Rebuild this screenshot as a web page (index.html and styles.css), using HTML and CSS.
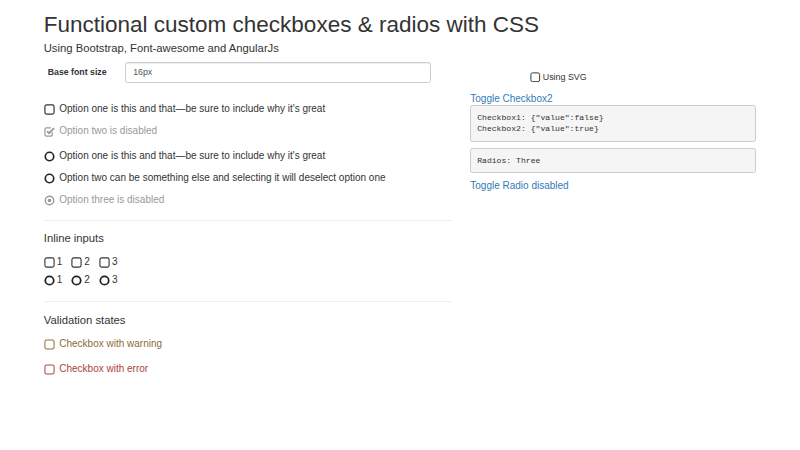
FILE: index.html
```html
<!DOCTYPE html>
<html>
<head>
<meta charset="utf-8">
<link rel="stylesheet" href="styles.css">
</head>
<body>
<div class="container">
  <h1 class="title">Functional custom checkboxes &amp; radios with CSS</h1>
  <p class="subtitle">Using Bootstrap, Font-awesome and AngularJs</p>
  <div class="row">
    <div class="col-left">
      <div class="form-group">
        <label class="form-label">Base font size</label>
        <div class="input">16px</div>
      </div>

      <div class="group first">
        <div class="opt">
          <svg class="ico" viewBox="0 0 12 12"><rect x="1" y="1" width="10" height="10" rx="2" fill="none" stroke="#333" stroke-width="1.3"/></svg>
          <span>Option one is this and that—be sure to include why it's great</span>
        </div>
        <div class="opt disabled">
          <svg class="ico" viewBox="0 0 12 12"><path d="M9 6.8V9.5a1.5 1.5 0 0 1-1.5 1.5h-5A1.5 1.5 0 0 1 1 9.5v-6A1.5 1.5 0 0 1 2.5 2H7.5" fill="none" stroke="#999" stroke-width="1.3"/><path d="M3.3 5.6l2.2 2.2 5.5-5.5" fill="none" stroke="#999" stroke-width="2"/></svg>
          <span>Option two is disabled</span>
        </div>
      </div>

      <div class="group">
        <div class="opt">
          <svg class="ico" viewBox="0 0 12 12"><circle cx="6" cy="6" r="4.6" fill="none" stroke="#222" stroke-width="1.8"/></svg>
          <span>Option one is this and that—be sure to include why it's great</span>
        </div>
        <div class="opt">
          <svg class="ico" viewBox="0 0 12 12"><circle cx="6" cy="6" r="4.6" fill="none" stroke="#222" stroke-width="1.8"/></svg>
          <span>Option two can be something else and selecting it will deselect option one</span>
        </div>
        <div class="opt disabled">
          <svg class="ico" viewBox="0 0 12 12"><circle cx="6" cy="6" r="4.6" fill="none" stroke="#999" stroke-width="1.5"/><circle cx="6" cy="6" r="2" fill="#999"/></svg>
          <span>Option three is disabled</span>
        </div>
      </div>

      <hr class="sep first-sep">
      <h4 class="section">Inline inputs</h4>
      <div class="inline-row cb">
        <span class="inl"><svg class="ico-s" viewBox="0 0 12 12"><rect x="1" y="1" width="10" height="10" rx="2" fill="none" stroke="#333" stroke-width="1.2"/></svg>1</span>
        <span class="inl"><svg class="ico-s" viewBox="0 0 12 12"><rect x="1" y="1" width="10" height="10" rx="2" fill="none" stroke="#333" stroke-width="1.2"/></svg>2</span>
        <span class="inl"><svg class="ico-s" viewBox="0 0 12 12"><rect x="1" y="1" width="10" height="10" rx="2" fill="none" stroke="#333" stroke-width="1.2"/></svg>3</span>
      </div>
      <div class="inline-row">
        <span class="inl"><svg class="ico-s" viewBox="0 0 12 12"><circle cx="6" cy="6" r="4.6" fill="none" stroke="#222" stroke-width="1.9"/></svg>1</span>
        <span class="inl"><svg class="ico-s" viewBox="0 0 12 12"><circle cx="6" cy="6" r="4.6" fill="none" stroke="#222" stroke-width="1.9"/></svg>2</span>
        <span class="inl"><svg class="ico-s" viewBox="0 0 12 12"><circle cx="6" cy="6" r="4.6" fill="none" stroke="#222" stroke-width="1.9"/></svg>3</span>
      </div>

      <hr class="sep second-sep">
      <h4 class="section val">Validation states</h4>
      <div class="opt warning">
        <svg class="ico" viewBox="0 0 12 12"><rect x="1" y="1" width="10" height="10" rx="2" fill="none" stroke="#8a6d3b" stroke-width="1.1"/></svg>
        <span>Checkbox with warning</span>
      </div>
      <div class="opt error">
        <svg class="ico" viewBox="0 0 12 12"><rect x="1" y="1" width="10" height="10" rx="2" fill="none" stroke="#a94442" stroke-width="1.1"/></svg>
        <span>Checkbox with error</span>
      </div>
    </div>

    <div class="col-right">
      <div class="svg-row">
        <svg class="ico" viewBox="0 0 12 12"><rect x="1" y="1" width="10" height="10" rx="2" fill="none" stroke="#333" stroke-width="1.1"/></svg>
        <span>Using SVG</span>
      </div>
      <a class="link first-link">Toggle Checkbox2</a>
      <pre class="pre">Checkbox1: {"value":false}
Checkbox2: {"value":true}</pre>
      <pre class="pre second">Radios: Three</pre>
      <a class="link">Toggle Radio disabled</a>
    </div>
  </div>
</div>
</body>
</html>
```
FILE: styles.css
```css
html, body {
  margin: 0;
  padding: 0;
  background: #fff;
}
body {
  font-family: "Liberation Sans", Helvetica, Arial, sans-serif;
  font-size: 10px;
  line-height: 1.42857;
  color: #333;
}
.container {
  width: 712.5px;
  margin: 0 auto;
  padding: 0 9.375px;
}
.title {
  font-size: 22.5px;
  font-weight: 500;
  line-height: 24.75px;
  margin: 12.5px 0 0;
}
.subtitle {
  font-size: 11.25px;
  line-height: 14px;
  margin: 4px 0 0;
}
.row {
  display: flex;
  gap: 18.75px;
  margin-top: 6.75px;
}
.col-left {
  width: 407.8px;
}
.col-right {
  width: 286px;
}
.form-group {
  display: flex;
  align-items: center;
}
.form-label {
  width: 77px;
  padding-left: 4px;
  font-weight: bold;
  font-size: 8.75px;
}
.input {
  flex: 1;
  height: 21.25px;
  box-sizing: border-box;
  border: 1px solid #ccc;
  border-radius: 2.5px;
  box-shadow: inset 0 1px 1px rgba(0,0,0,.075);
  padding: 0 7.5px;
  font-size: 8.75px;
  line-height: 19.25px;
  color: #555;
  margin-right: 21px;
}
.group.first {
  margin-top: 14.75px;
}
.group + .group {
  margin-top: 3px;
}
.opt {
  display: flex;
  align-items: center;
  height: 22px;
}
.ico {
  width: 11px;
  height: 11px;
  margin-right: 4.5px;
  flex: none;
}
.opt.disabled {
  color: #999;
}
.sep {
  border: 0;
  border-top: 1px solid #eee;
  margin: 0;
}
.first-sep {
  margin-top: 9px;
}
.section {
  font-size: 11.25px;
  font-weight: 500;
  line-height: 12.4px;
  margin: 11px 0 0;
}
.inline-row {
  display: flex;
  height: 18px;
  align-items: center;
}
.inline-row.cb {
  margin-top: 8.6px;
}
.inl {
  display: inline-flex;
  align-items: center;
  margin-right: 9px;
}
.ico-s {
  width: 11px;
  height: 11px;
  margin-right: 2px;
}
.second-sep {
  margin-top: 12px;
}
.section.val {
  margin-top: 12px;
}
.warning {
  color: #8a6d3b;
  margin-top: 6.6px;
}
.error {
  color: #a94442;
  margin-top: 3px;
}
.svg-row {
  display: flex;
  align-items: center;
  height: 20px;
  margin-top: 5px;
  padding-left: 60px;
  font-size: 8.9px;
}
.svg-row .ico {
  width: 10.5px;
  height: 10.5px;
  margin-right: 2px;
}
.link {
  display: block;
  color: #337ab7;
  margin-top: 5px;
  text-decoration: none;
}
.link.first-link {
  margin-top: 4.5px;
  line-height: 13.3px;
}
.pre {
  font-family: "Liberation Mono", Menlo, Monaco, Consolas, monospace;
  font-size: 8.125px;
  line-height: 11.6px;
  background: #f5f5f5;
  border: 1px solid #ccc;
  border-radius: 2.5px;
  padding: 5.9px;
  margin: 0 0 6.25px;
  color: #333;
}
.pre.second {
  margin-bottom: 0;
}
.pre.second + .link {
  margin-top: 5.5px;
}
```
